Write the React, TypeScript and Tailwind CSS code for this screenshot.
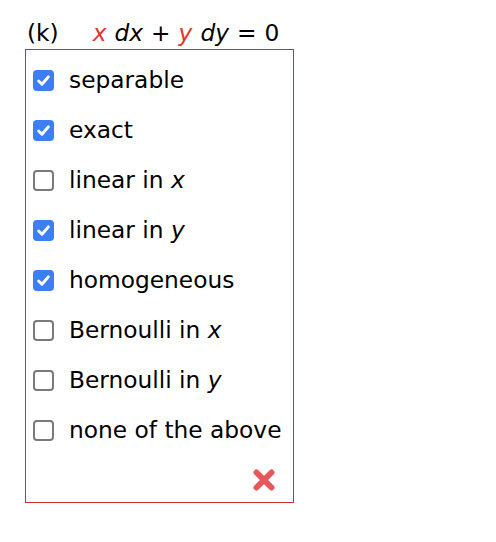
import React from "react";

const options: { label: React.ReactNode; checked: boolean }[] = [
  { label: "separable", checked: true },
  { label: "exact", checked: true },
  { label: <>linear in <i>x</i></>, checked: false },
  { label: <>linear in <i>y</i></>, checked: true },
  { label: "homogeneous", checked: true },
  { label: <>Bernoulli in <i>x</i></>, checked: false },
  { label: <>Bernoulli in <i>y</i></>, checked: false },
  { label: "none of the above", checked: false },
];

function Box({ checked }: { checked: boolean }) {
  if (checked) {
    return (
      <span className="flex h-[21px] w-[21px] shrink-0 items-center justify-center rounded-[4px] bg-[#3b7ef6]">
        <svg width="15" height="15" viewBox="0 0 14 14">
          <path d="M2.5 7.5 L5.6 10.5 L11.5 3.6" fill="none" stroke="white" strokeWidth="2.8" strokeLinecap="round" strokeLinejoin="round" />
        </svg>
      </span>
    );
  }
  return <span className="h-[21px] w-[21px] shrink-0 rounded-[4px] border-2 border-[#7a7a7a] bg-white" />;
}

export default function App() {
  return (
    <div className="min-h-[542px] bg-white pl-[25px] pt-[16px] text-[23.3px] text-black" style={{ fontFamily: '"DejaVu Sans", Verdana, sans-serif' }}>
      <div className="flex h-[33px] items-center leading-[30px]">
        <span className="pl-[2px]">(k)</span>
        <span className="ml-[34px] whitespace-pre [word-spacing:0.6px]">
          <i className="text-[#e8352b]">x</i> <i>dx</i> + <i className="text-[#e8352b]">y</i> <i>dy</i> = 0
        </span>
      </div>
      <div className="flex h-[454px] w-[269px] flex-col border border-[#c8302a] px-[7px] pt-[5px]">
        {options.map((o, i) => (
          <label key={i} className="flex h-[50px] items-center gap-[15px]">
            <Box checked={o.checked} />
            <span className="leading-[30px]">{o.label}</span>
          </label>
        ))}
        <div className="flex justify-end pr-[10px] pt-[13px]">
          <svg width="24" height="24" viewBox="0 0 24 24">
            <path d="M4.5 4.5 L19.5 19.5 M19.5 4.5 L4.5 19.5" stroke="#e8575c" strokeWidth="6" strokeLinecap="round" />
          </svg>
        </div>
      </div>
    </div>
  );
}
